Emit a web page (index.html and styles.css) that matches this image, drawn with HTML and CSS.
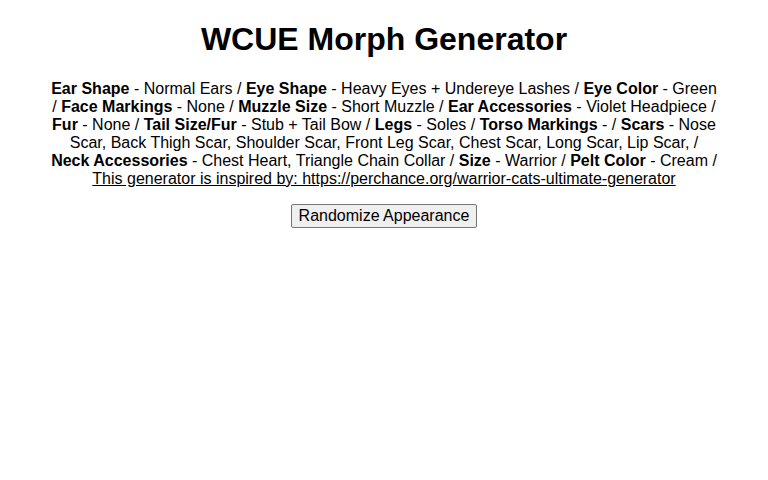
FILE: index.html
```html
<!DOCTYPE html>
<html lang="en">
<head>
<meta charset="utf-8">
<title>WCUE Morph Generator</title>
<link rel="stylesheet" href="styles.css">
</head>
<body>
<main class="page">
  <h1 class="title">WCUE Morph Generator</h1>
  <p class="morph">
    <b>Ear Shape</b> - Normal Ears / <b>Eye Shape</b> - Heavy Eyes + Undereye Lashes / <b>Eye Color</b> - Green / <b>Face Markings</b> - None / <b>Muzzle Size</b> - Short Muzzle / <b>Ear Accessories</b> - Violet Headpiece / <b>Fur</b> - None / <b>Tail Size/Fur</b> - Stub + Tail Bow / <b>Legs</b> - Soles / <b>Torso Markings</b> - / <b>Scars</b> - Nose Scar, Back Thigh Scar, Shoulder Scar, Front Leg Scar, Chest Scar, Long Scar, Lip Scar, / <b>Neck Accessories</b> - Chest Heart, Triangle Chain Collar / <b>Size</b> - Warrior / <b>Pelt Color</b> - Cream /
    <br>
    <a class="source" href="https://perchance.org/warrior-cats-ultimate-generator">This generator is inspired by: https://perchance.org/warrior-cats-ultimate-generator</a>
  </p>
  <div class="actions">
    <button class="randomize" type="button">Randomize Appearance</button>
  </div>
</main>
</body>
</html>
```
FILE: styles.css
```css
html, body {
  background: #ffffff;
}
body {
  margin: 0 8px 8px;
  font-family: "Liberation Sans", Arial, sans-serif;
  color: #000;
}
.page {
  text-align: center;
}
.title {
  font-size: 32px;
  font-weight: bold;
  margin: 21.44px 0;
}
.morph {
  font-size: 16px;
  margin: 16px 42px;
}
.morph b {
  font-weight: bold;
}
.source {
  color: inherit;
  text-decoration: underline;
}
.actions {
  margin: 0;
}
.randomize {
  font-family: "Liberation Sans", Arial, sans-serif;
  font-size: 16px;
  color: #000;
  background: #efefef;
  border: 1px solid #767676;
  border-radius: 2px;
  padding: 2px 7px;
}
```
